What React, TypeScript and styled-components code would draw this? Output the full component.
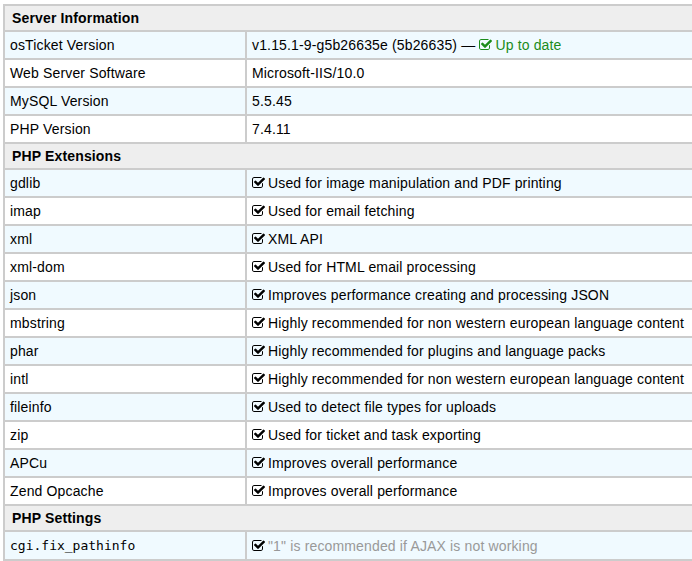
import React from "react";
import styled, { createGlobalStyle } from "styled-components";

const Global = createGlobalStyle`
  html, body { margin: 0; padding: 0; overflow: hidden; background: #fff; }
  body { font-family: "Liberation Sans", Arial, sans-serif; font-size: 14px; color: #000; letter-spacing: 0.15px; }
`;

const Page = styled.div`
  padding: 4px 0 0 3px;
`;

const Table = styled.table`
  width: 730px;
  border-collapse: separate;
  border-spacing: 0;
  border-top: 2px solid #ccc;
  border-left: 2px solid #ccc;
  table-layout: fixed;
`;

const Col = styled.col<{ $w?: number }>`
  ${(p) => (p.$w ? `width: ${p.$w}px;` : "")}
`;

const Th = styled.th`
  text-align: left;
  font-weight: bold;
  background: #eee;
  padding: 4px 7px;
  line-height: 16px;
  border-right: 2px solid #ccc;
  border-bottom: 2px solid #ccc;
`;

const Row = styled.tr<{ $odd: boolean }>`
  background: ${(p) => (p.$odd ? "#f0faff" : "#fff")};
`;

const Td = styled.td`
  box-sizing: border-box;
  padding: 5px 5px;
  line-height: 16px;
  border-right: 2px solid #ccc;
  border-bottom: 2px solid #ccc;
  white-space: nowrap;
  overflow: hidden;
`;

const Mono = styled.span`
  font-family: "DejaVu Sans Mono", "Liberation Mono", monospace;
  font-size: 13px;
  letter-spacing: 0;
`;

const Ok = styled.span`
  color: #1b8c1b;
`;

const Muted = styled.span`
  color: #999;
`;

const IconWrap = styled.svg<{ $color?: string }>`
  width: 13px;
  height: 14px;
  vertical-align: -2px;
  margin-right: 3px;
  fill: ${(p) => p.$color || "#000"};
`;

const Check = ({ color }: { color?: string }) => (
  <IconWrap $color={color} viewBox="0 0 1664 1792">
    <path d="M1408 930v318q0 119-84.5 203.5t-203.5 84.5h-832q-119 0-203.5-84.5t-84.5-203.5v-832q0-119 84.5-203.5t203.5-84.5h832q63 0 117 25 15 7 18 23 3 17-9 29l-49 49q-10 10-23 10-3 0-9-2-23-6-45-6h-832q-66 0-113 47t-47 113v832q0 66 47 113t113 47h832q66 0 113-47t47-113v-254q0-13 9-22l64-64q10-10 23-10 6 0 12 3 20 8 20 29zm231-489l-814 814q-24 24-57 24t-57-24l-430-430q-24-24-24-57t24-57l110-110q24-24 57-24t57 24l263 263 647-647q24-24 57-24t57 24l110 110q24 24 24 57t-24 57z" />
  </IconWrap>
);

const server: [string, React.ReactNode][] = [
  [
    "osTicket Version",
    <>
      v1.15.1-9-g5b26635e (5b26635) — {" "}
      <Ok>
        <Check color="#1b8c1b" />
        Up to date
      </Ok>
    </>,
  ],
  ["Web Server Software", "Microsoft-IIS/10.0"],
  ["MySQL Version", "5.5.45"],
  ["PHP Version", "7.4.11"],
];

const exts: [string, string][] = [
  ["gdlib", "Used for image manipulation and PDF printing"],
  ["imap", "Used for email fetching"],
  ["xml", "XML API"],
  ["xml-dom", "Used for HTML email processing"],
  ["json", "Improves performance creating and processing JSON"],
  ["mbstring", "Highly recommended for non western european language content"],
  ["phar", "Highly recommended for plugins and language packs"],
  ["intl", "Highly recommended for non western european language content"],
  ["fileinfo", "Used to detect file types for uploads"],
  ["zip", "Used for ticket and task exporting"],
  ["APCu", "Improves overall performance"],
  ["Zend Opcache", "Improves overall performance"],
];

export default function App() {
  return (
    <Page>
      <Global />
      <Table>
        <colgroup>
          <Col $w={242} />
          <Col />
        </colgroup>
        <thead>
          <tr>
            <Th colSpan={2}>Server Information</Th>
          </tr>
        </thead>
        <tbody>
          {server.map(([k, v], i) => (
            <Row key={k} $odd={i % 2 === 0}>
              <Td>{k}</Td>
              <Td>{v}</Td>
            </Row>
          ))}
        </tbody>
        <thead>
          <tr>
            <Th colSpan={2}>PHP Extensions</Th>
          </tr>
        </thead>
        <tbody>
          {exts.map(([k, v], i) => (
            <Row key={k} $odd={i % 2 === 0}>
              <Td>{k}</Td>
              <Td>
                <Check />
                {v}
              </Td>
            </Row>
          ))}
        </tbody>
        <thead>
          <tr>
            <Th colSpan={2}>PHP Settings</Th>
          </tr>
        </thead>
        <tbody>
          <Row $odd>
            <Td>
              <Mono>cgi.fix_pathinfo</Mono>
            </Td>
            <Td>
              <Check />
              <Muted>"1" is recommended if AJAX is not working</Muted>
            </Td>
          </Row>
        </tbody>
      </Table>
    </Page>
  );
}
